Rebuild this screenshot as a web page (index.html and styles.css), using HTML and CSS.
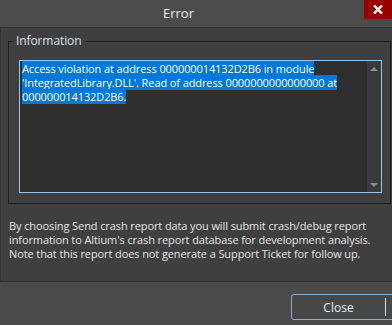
FILE: index.html
```html
<!DOCTYPE html>
<html lang="en">
<head>
    <meta charset="UTF-8">
    <meta name="viewport" content="width=device-width, initial-scale=1.0">
    <title>Error</title>
    <link rel="stylesheet" href="styles.css">
</head>
<body>
    <div class="window">
        <div class="titlebar">
            <span class="title">Error</span>
            <span class="close-x">
                <svg width="10" height="9" viewBox="0 0 10 9">
                    <path d="M1 0.5 L9 8.5 M9 0.5 L1 8.5" stroke="#fff" stroke-width="2.4"/>
                </svg>
            </span>
        </div>

        <div class="content">
            <fieldset class="group">
                <legend>Information</legend>
                <div class="memo">
                    <div class="memo-text">
                        <span class="sel">Access violation at address 000000014132D2B6 in module</span><br>
                        <span class="sel">'IntegratedLibrary.DLL'. Read of address 0000000000000000 at</span><br>
                        <span class="sel">000000014132D2B6.</span>
                    </div>
                    <div class="scrollbar">
                        <span class="arrow up"></span>
                        <span class="arrow down"></span>
                    </div>
                </div>
            </fieldset>

            <p class="note">
                By choosing Send crash report data you will submit crash/debug report<br>
                information to Altium's crash report database for development analysis.<br>
                Note that this report does not generate a Support Ticket for follow up.
            </p>
        </div>

        <div class="footer">
            <button class="btn-close">
                <span class="btn-label">Close</span>
                <span class="btn-split"></span>
            </button>
        </div>
    </div>
</body>
</html>
```

FILE: styles.css
```css
body {
    margin: 0;
    background: #4a4a4a;
    font-family: "Open Sans", "Noto Sans", sans-serif;
    font-size: 11px;
    letter-spacing: -0.1px;
    color: #e2e6ea;
    overflow: hidden;
}
.window {
    width: 392px;
    height: 325px;
    display: flex;
    flex-direction: column;
}
.titlebar {
    position: relative;
    height: 27px;
    flex: none;
    background: #4b4b4b;
    display: flex;
    align-items: center;
    justify-content: center;
}
.title {
    font-size: 13px;
    letter-spacing: 0;
    color: #e8eef4;
    margin-left: -35px;
    margin-top: -2px;
}
.close-x {
    position: absolute;
    top: 0;
    right: 0;
    width: 28px;
    height: 19px;
    background: #9b0000;
    display: flex;
    align-items: center;
    justify-content: center;
}
.content {
    box-sizing: border-box;
    height: 255px;
    flex: none;
    background: #3f3f3f;
    border-top: 1px solid #2f2f2f;
    border-bottom: 1px solid #2f2f2f;
    border-left: 1px solid #333;
    padding: 5px 1px 0 7px;
}
.group {
    margin: 0;
    padding: 11px 8px 10px 10px;
    border: 1px solid #1e1e1e;
    min-width: 0;
}
.group legend {
    padding: 0 5px 0 3px;
    margin-left: -6px;
    line-height: 16px;
    font-size: 12px;
    color: #d9e1e8;
}
.memo {
    height: 131px;
    border: 1px solid #9ac6ee;
    background: #2f2f2f;
    display: flex;
}
.memo-text {
    flex: 1;
    padding: 1px 2px;
    line-height: 14px;
    color: #fff;
    white-space: nowrap;
}
.sel {
    background: #0078d7;
}
.scrollbar {
    width: 14px;
    background: #3a3a3a;
    display: flex;
    flex-direction: column;
    justify-content: space-between;
    align-items: center;
    padding: 6px 0 5px;
}
.arrow {
    width: 0;
    height: 0;
    border-left: 4px solid transparent;
    border-right: 4px solid transparent;
}
.arrow.up {
    border-bottom: 4px solid #8a8a8a;
}
.arrow.down {
    border-top: 4px solid #8a8a8a;
}
.note {
    margin: 15px 0 0 1px;
    line-height: 14px;
    color: #e4e4e4;
    white-space: nowrap;
}
.footer {
    flex: 1;
    background: #4a4a4a;
    padding: 12px 0 0 291px;
}
.btn-close {
    width: 110px;
    height: 26px;
    background: #474747;
    border: 1px solid #8aaed0;
    border-radius: 3px;
    padding: 0;
    display: flex;
    align-items: center;
    font-family: inherit;
    font-size: 12px;
    color: #e8eef4;
}
.btn-label {
    width: 93px;
    text-align: center;
}
.btn-split {
    width: 1px;
    height: 18px;
    background: #dcdcdc;
}
```
